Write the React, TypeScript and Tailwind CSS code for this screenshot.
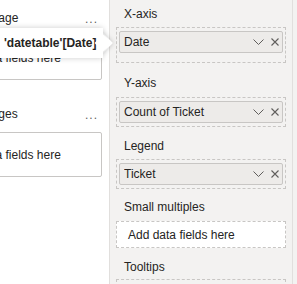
import React from "react";

function Chevron() {
  return (
    <svg width="11" height="6" viewBox="0 0 11 6" fill="none" className="shrink-0">
      <path d="M0.5 0.5 L5.5 5.5 L10.5 0.5" stroke="#605e5c" strokeWidth="1" />
    </svg>
  );
}

function XIcon() {
  return (
    <svg width="8" height="8" viewBox="0 0 8 8" fill="none" className="shrink-0">
      <path d="M0.5 0.5 L7.5 7.5 M7.5 0.5 L0.5 7.5" stroke="#605e5c" strokeWidth="1.1" />
    </svg>
  );
}

function Pill({ label }: { label: string }) {
  return (
    <div className="flex h-[22px] items-center rounded-[2px] border border-[#c8c6c4] bg-[#edebe9] pl-[4px] pr-[3px]">
      <span className="flex-1 truncate leading-4">{label}</span>
      <div className="flex items-center gap-[7px]">
        <Chevron />
        <XIcon />
      </div>
    </div>
  );
}

function Well({ value, extra }: { value: string; extra?: boolean }) {
  return (
    <div
      className={
        "border border-dashed border-[#c8c6c4] px-[2px] pt-[3px] " + (extra ? "pb-[9px]" : "pb-[3px]")
      }
    >
      <Pill label={value} />
    </div>
  );
}

export default function App() {
  return (
    <div className="relative flex h-[284px] w-[297px] overflow-hidden bg-white font-['Liberation_Sans',Arial,sans-serif] text-xs text-[#252423]">
      {/* Left filters pane */}
      <div className="w-[109px] shrink-0 overflow-hidden bg-white">
        <div className="ml-[-87px] w-[189px]">
          <div className="mt-[10px] flex h-4 items-center justify-between pl-[4px] pr-[4px]">
            <span className="whitespace-nowrap leading-4">Filters on this page</span>
            <span className="mt-[2px] leading-4 tracking-[1px] text-[#605e5c]">...</span>
          </div>
          <div className="mt-[9px] flex h-[45px] items-center justify-center rounded-[2px] border border-[#c8c6c4] bg-white">
            <span className="whitespace-nowrap">Add data fields here</span>
          </div>
          <div className="mt-[26px] flex h-4 items-center justify-between pl-[4px] pr-[4px]">
            <span className="whitespace-nowrap leading-4">Filters on all pages</span>
            <span className="mt-[2px] leading-4 tracking-[1px] text-[#605e5c]">...</span>
          </div>
          <div className="mt-[10px] flex h-[45px] items-center justify-center rounded-[2px] border border-[#c8c6c4] bg-white">
            <span className="whitespace-nowrap">Add data fields here</span>
          </div>
        </div>
      </div>

      {/* Separator */}
      <div className="w-px shrink-0 bg-[#e1dfdd]" />

      {/* Right fields pane */}
      <div className="w-[182px] shrink-0 bg-[#f3f2f1] pl-[6px] pr-[6px] pt-[6px]">
        <div className="pl-2 leading-4">X-axis</div>
        <div className="mt-[5px]">
          <Well value="Date" extra />
        </div>

        <div className="mt-[12px] pl-2 leading-4">Y-axis</div>
        <div className="mt-[6px]">
          <Well value="Count of Ticket" />
        </div>

        <div className="mt-[11px] pl-2 leading-4">Legend</div>
        <div className="mt-[5px]">
          <Well value="Ticket" />
        </div>

        <div className="mt-[10px] pl-2 leading-4">Small multiples</div>
        <div className="mt-[6px] flex h-[27px] items-center border border-dashed border-[#c8c6c4] bg-white pl-[11px]">
          <span className="leading-4">Add data fields here</span>
        </div>

        <div className="mt-[11px] pl-2 leading-4">Tooltips</div>
        <div className="mt-[4px] h-[30px] border border-dashed border-[#c8c6c4]" />
      </div>

      {/* Right edge line */}
      <div className="w-px shrink-0 bg-[#e1dfdd]" />
      <div className="flex-1 bg-[#f3f2f1]" />

      {/* Tooltip overlay */}
      <div className="absolute left-[-10px] top-[28px] h-[30px] w-[113px]">
        <div className="absolute right-[-7px] top-[8px] h-[14px] w-[14px] rotate-45 bg-white shadow-[0_0_5px_rgba(0,0,0,0.22)]" />
        <div className="relative z-10 flex h-full items-center bg-white pl-[14px] shadow-[0_0_6px_rgba(0,0,0,0.2)]">
          <span className="whitespace-nowrap font-semibold">'datetable'[Date]</span>
        </div>
        <div className="absolute right-[-6px] top-[9px] z-20 h-[12px] w-[12px] rotate-45 bg-white" />
      </div>
    </div>
  );
}
